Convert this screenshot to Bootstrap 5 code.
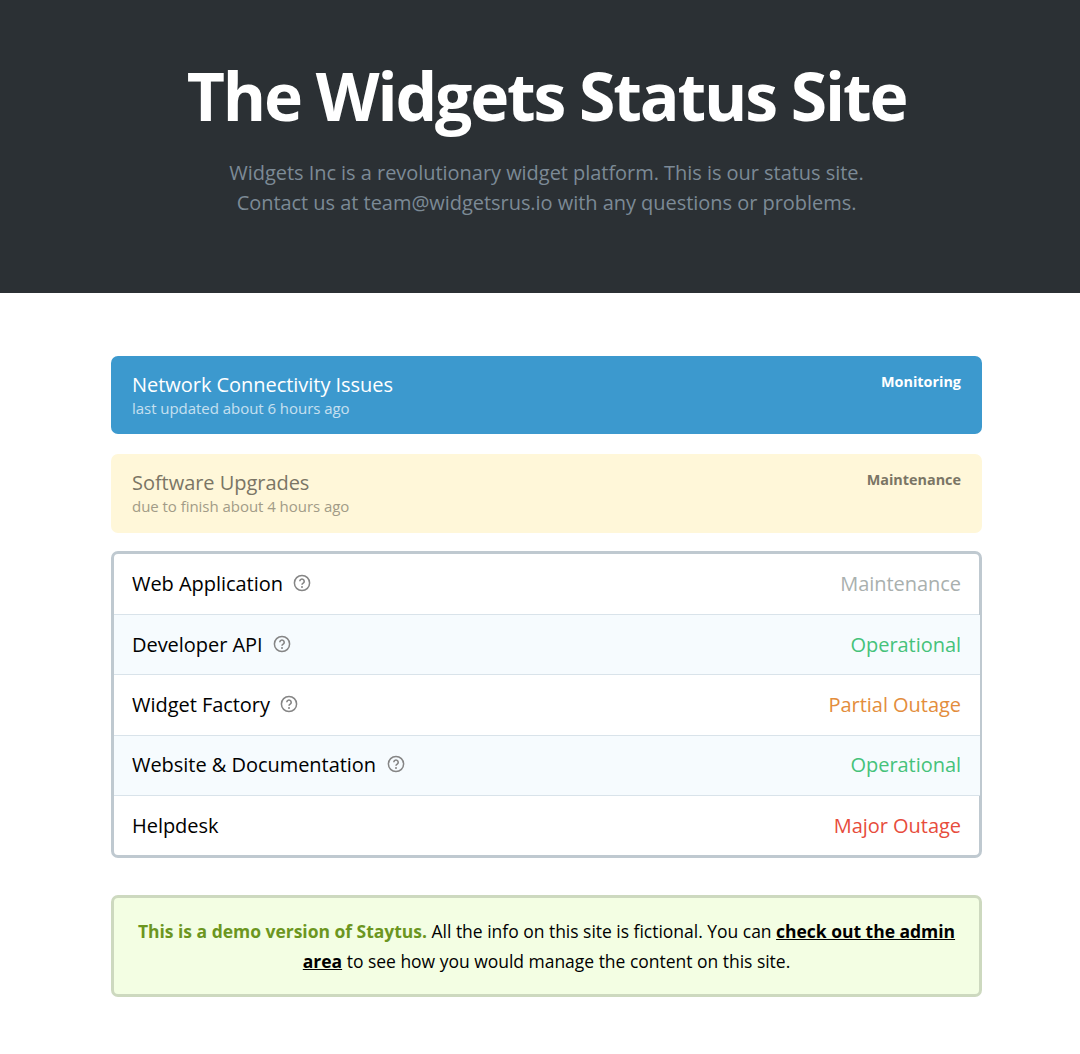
<!doctype html>
<html lang="en"><head><meta charset="utf-8"><title>The Widgets Status Site</title>
<link href="https://cdn.jsdelivr.net/npm/bootstrap@5.3.0/dist/css/bootstrap.min.css" rel="stylesheet">
<style>
body{font-family:"Open Sans",sans-serif;color:#000;background:#fff}
.hero{background:#2b3034;height:293px;padding:57px 0 0 13px}
.hero-title{font-size:66px;line-height:76px;font-weight:700;letter-spacing:-2.17px;color:#fff;margin:0 0 25px}
.hero-text{font-size:20px;line-height:30px;letter-spacing:-.04px;color:#7c8a96;margin:0}
.page-wrap{width:871px;margin:63px auto 0 111px}
.issue{border-radius:7px;padding:16px 21px 14px;height:78px;margin-bottom:20px;letter-spacing:-.04px}
.issue-blue{background:#3c99ce;color:#fff}
.issue-yellow{background:#fff7d9;color:#7a7565;height:79px;margin-bottom:18px}
.issue-name{font-size:20px;line-height:26px}
.issue-sub{font-size:15px;line-height:20px;opacity:.7}
.issue-state{font-size:14.4px;font-weight:700;line-height:20px;letter-spacing:0}
.svc-box{border:3px solid #bfc9d0;border-radius:7px;height:307px;margin-bottom:37px}
.svc-row{height:60.5px;padding:0 18px 0 18px;font-size:20px;letter-spacing:-.04px;border-bottom:1px solid #d9e3ea;color:#000}
.svc-row:first-child{border-radius:4px 4px 0 0}
.svc-row:last-child{border-bottom:0;border-radius:0 0 4px 4px}
.svc-row:not(:first-child):not(:last-child){margin-right:-1px;padding-right:19px}
.svc-row:nth-child(even){background:#f6fbfe}
.svc-row:nth-child(2){padding-top:1px}
.svc-row:nth-child(3){background:#fff}
.q-icon{width:18px;height:18px;margin:0 0 2px 10.5px;color:#858585}
.st-maint{color:#a9b0ae}.st-ok{color:#45c27a}.st-partial{color:#e38d3c}.st-major{color:#e74c3c}
.demo-box{border:3px solid #cdd9bf;border-radius:7px;background:#f3fee3;font-size:17.5px;letter-spacing:-.02px;line-height:30px;padding:18px 20px;text-align:center;height:102px}
.demo-box strong.lead-in{color:#6c961f;font-weight:700}
.demo-box a{color:#000;font-weight:700}
</style></head>
<body>
<header class="hero text-center">
<h1 class="hero-title">The Widgets Status Site</h1>
<p class="hero-text">Widgets Inc is a revolutionary widget platform. This is our status site.<br>Contact us at team@widgetsrus.io with any questions or problems.</p>
</header>
<main class="page-wrap">
<div class="issue issue-blue d-flex justify-content-between"><div><div class="issue-name">Network Connectivity Issues</div><div class="issue-sub">last updated about 6 hours ago</div></div><div class="issue-state">Monitoring</div></div>
<div class="issue issue-yellow d-flex justify-content-between"><div><div class="issue-name">Software Upgrades</div><div class="issue-sub">due to finish about 4 hours ago</div></div><div class="issue-state">Maintenance</div></div>
<div class="svc-box">
<div class="svc-row d-flex justify-content-between align-items-center"><div class="d-flex align-items-center">Web Application<svg class="q-icon" viewBox="0 0 18 18" fill="none" stroke="currentColor"><circle cx="9" cy="9" r="7.6" stroke-width="1.5"/><path d="M6.8 7.2a2.2 2.2 0 1 1 3.4 1.9c-.8.5-1.2.9-1.2 1.6" stroke-width="1.6"/><circle cx="9" cy="13" r="1" fill="currentColor" stroke="none"/></svg></div><div class="st-maint">Maintenance</div></div>
<div class="svc-row d-flex justify-content-between align-items-center"><div class="d-flex align-items-center">Developer API<svg class="q-icon" viewBox="0 0 18 18" fill="none" stroke="currentColor"><circle cx="9" cy="9" r="7.6" stroke-width="1.5"/><path d="M6.8 7.2a2.2 2.2 0 1 1 3.4 1.9c-.8.5-1.2.9-1.2 1.6" stroke-width="1.6"/><circle cx="9" cy="13" r="1" fill="currentColor" stroke="none"/></svg></div><div class="st-ok">Operational</div></div>
<div class="svc-row d-flex justify-content-between align-items-center"><div class="d-flex align-items-center">Widget Factory<svg class="q-icon" viewBox="0 0 18 18" fill="none" stroke="currentColor"><circle cx="9" cy="9" r="7.6" stroke-width="1.5"/><path d="M6.8 7.2a2.2 2.2 0 1 1 3.4 1.9c-.8.5-1.2.9-1.2 1.6" stroke-width="1.6"/><circle cx="9" cy="13" r="1" fill="currentColor" stroke="none"/></svg></div><div class="st-partial">Partial Outage</div></div>
<div class="svc-row d-flex justify-content-between align-items-center"><div class="d-flex align-items-center">Website &amp; Documentation<svg class="q-icon" viewBox="0 0 18 18" fill="none" stroke="currentColor"><circle cx="9" cy="9" r="7.6" stroke-width="1.5"/><path d="M6.8 7.2a2.2 2.2 0 1 1 3.4 1.9c-.8.5-1.2.9-1.2 1.6" stroke-width="1.6"/><circle cx="9" cy="13" r="1" fill="currentColor" stroke="none"/></svg></div><div class="st-ok">Operational</div></div>
<div class="svc-row d-flex justify-content-between align-items-center"><div>Helpdesk</div><div class="st-major">Major Outage</div></div>
</div>
<div class="demo-box"><strong class="lead-in">This is a demo version of Staytus.</strong> All the info on this site is fictional. You can <a href="#">check out the admin area</a> to see how you would manage the content on this site.</div>
</main>
<script src="https://cdn.jsdelivr.net/npm/bootstrap@5.3.0/dist/js/bootstrap.bundle.min.js"></script>
</body></html>
